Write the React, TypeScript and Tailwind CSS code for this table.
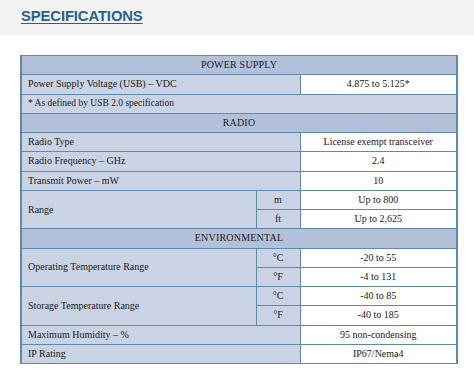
type Row =
  | { kind: "section"; label: string }
  | { kind: "pair"; label: string; value: string }
  | { kind: "note"; label: string }
  | { kind: "split"; label: string; units: [string, string][] }

const rows: Row[] = [
  { kind: "section", label: "POWER SUPPLY" },
  { kind: "pair", label: "Power Supply Voltage (USB) – VDC", value: "4.875 to 5.125*" },
  { kind: "note", label: "* As defined by USB 2.0 specification" },
  { kind: "section", label: "RADIO" },
  { kind: "pair", label: "Radio Type", value: "License exempt transceiver" },
  { kind: "pair", label: "Radio Frequency – GHz", value: "2.4" },
  { kind: "pair", label: "Transmit Power – mW", value: "10" },
  { kind: "split", label: "Range", units: [["m", "Up to 800"], ["ft", "Up to 2,625"]] },
  { kind: "section", label: "ENVIRONMENTAL" },
  { kind: "split", label: "Operating Temperature Range", units: [["°C", "-20 to 55"], ["°F", "-4 to 131"]] },
  { kind: "split", label: "Storage Temperature Range", units: [["°C", "-40 to 85"], ["°F", "-40 to 185"]] },
  { kind: "pair", label: "Maximum Humidity – %", value: "95 non-condensing" },
  { kind: "pair", label: "IP Rating", value: "IP67/Nema4" },
]

const cell = "border border-[#5f88ab] h-[19.25px] p-0 leading-none"
const label = `${cell} bg-[#c9d3e3] pl-[6px] text-left`
const value = `${cell} bg-white text-center`

function SpecRow({ row }: { row: Row }) {
  if (row.kind === "section") {
    return (
      <tr>
        <td colSpan={3} className={`${cell} bg-[#b3c0da] text-center tracking-[0.2px]`}>
          {row.label}
        </td>
      </tr>
    )
  }
  if (row.kind === "note") {
    return (
      <tr>
        <td colSpan={3} className={`${label} text-[9.5px]`}>
          {row.label}
        </td>
      </tr>
    )
  }
  if (row.kind === "pair") {
    return (
      <tr>
        <td colSpan={2} className={label}>
          {row.label}
        </td>
        <td className={value}>{row.value}</td>
      </tr>
    )
  }
  return (
    <>
      {row.units.map(([unit, v], i) => (
        <tr key={unit + i}>
          {i === 0 && (
            <td rowSpan={2} className={label}>
              {row.label}
            </td>
          )}
          <td className={`${cell} bg-[#c9d3e3] text-center`}>{unit}</td>
          <td className={value}>{v}</td>
        </tr>
      ))}
    </>
  )
}

export default function App() {
  return (
    <div className="w-[474px] h-[379px] bg-white overflow-hidden">
      <div className="h-[35px] bg-[#f2f2f2] pl-[21px] pt-[9px]">
        <h2 className="font-['Liberation_Sans',Arial,sans-serif] font-bold text-[14.8px] leading-none text-[#23628f] underline underline-offset-2 tracking-[-0.1px]">
          SPECIFICATIONS
        </h2>
      </div>
      <div className="pl-[20px] pt-[20px]">
        <table className="w-[436px] table-fixed border-collapse border-x-2 border-[#5f88ab] font-['Liberation_Serif','Times_New_Roman',serif] text-[10px] text-[#1a1a1a]">
          <colgroup>
            <col className="w-[235px]" />
            <col className="w-[44px]" />
            <col className="w-[157px]" />
          </colgroup>
          <tbody>
            {rows.map((row, i) => (
              <SpecRow key={i} row={row} />
            ))}
          </tbody>
        </table>
      </div>
    </div>
  )
}
